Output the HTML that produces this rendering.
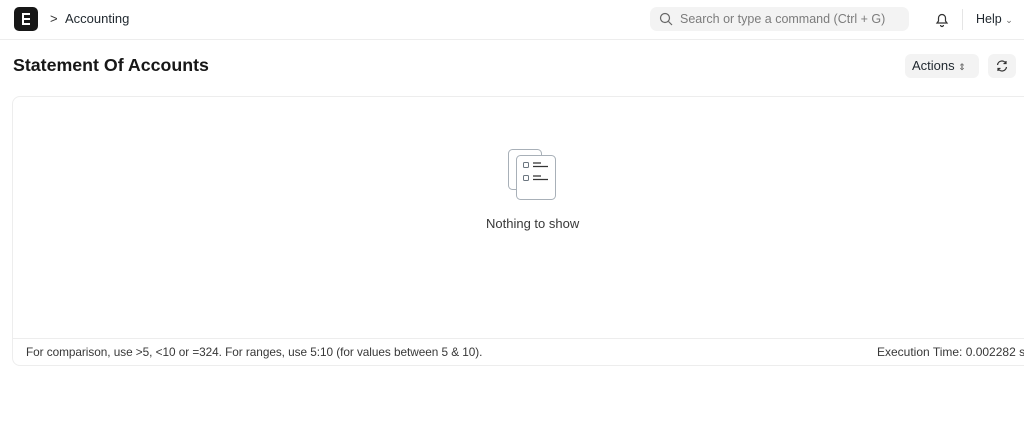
<!DOCTYPE html>
<html><head><style>
body{margin:0;width:1024px;height:439px;background:#fff;font-family:"Liberation Sans",sans-serif;color:#1f272e;position:relative;overflow:hidden}
.abs{position:absolute}
</style></head><body>
<div class="abs" style="left:0;top:0;width:1024px;height:39px;border-bottom:1px solid #ededed"></div>
<div class="abs" style="left:14px;top:7px;width:24px;height:24px;background:#171717;border-radius:5px"></div>
<div class="abs" style="left:22px;top:13px;width:8px;height:2px;background:#fff"></div>
<div class="abs" style="left:22px;top:13px;width:2px;height:12px;background:#fff"></div>
<div class="abs" style="left:22px;top:18px;width:8px;height:2px;background:#fff"></div>
<div class="abs" style="left:22px;top:23px;width:8px;height:2px;background:#fff"></div>
<div class="abs" style="left:50px;top:11px;font-size:13px;color:#333">&gt;</div>
<div class="abs" style="left:65px;top:11px;font-size:13px;color:#1f272e">Accounting</div>
<div class="abs" style="left:650px;top:7px;width:259px;height:24px;background:#f3f3f3;border-radius:7px"></div>
<svg class="abs" style="left:659px;top:12px" width="14" height="14" viewBox="0 0 14 14"><circle cx="6" cy="6" r="4.5" fill="none" stroke="#666" stroke-width="1.2"/><path d="M9.5 9.5L13 13" stroke="#666" stroke-width="1.2"/></svg>
<div class="abs" style="left:680px;top:12px;font-size:12.5px;color:#7c7c7c">Search or type a command (Ctrl + G)</div>
<svg class="abs" style="left:934px;top:11px" width="16" height="17" viewBox="0 0 16 17"><path d="M3 12h10l-1.5-2V7a3.5 3.5 0 0 0-7 0v3z M6.5 14a1.5 1.5 0 0 0 3 0" fill="none" stroke="#333" stroke-width="1.2"/></svg>
<div class="abs" style="left:962px;top:9px;width:1px;height:21px;background:#e5e5e5"></div>
<div class="abs" style="left:976px;top:12px;font-size:12.5px;color:#1f272e">Help <span style="font-size:9px;color:#666">&#8964;</span></div>
<div class="abs" style="left:13px;top:55px;font-size:17.8px;font-weight:bold;color:#171717">Statement Of Accounts</div>
<div class="abs" style="left:905px;top:54px;width:74px;height:24px;background:#f3f3f3;border-radius:6px"></div>
<div class="abs" style="left:912px;top:58px;font-size:13px;color:#1f272e">Actions <span style="font-size:9px;color:#555">&#8661;</span></div>
<div class="abs" style="left:988px;top:54px;width:28px;height:24px;background:#f3f3f3;border-radius:6px"></div>
<svg class="abs" style="left:995px;top:59px" width="14" height="14" viewBox="0 0 14 14"><path d="M2.5 6A4.5 4.5 0 0 1 11 4.5M11.5 8A4.5 4.5 0 0 1 3 9.5M11 2v2.5H8.5M3 12V9.5h2.5" fill="none" stroke="#333" stroke-width="1.2"/></svg>
<div class="abs" style="left:12px;top:96px;width:1020px;height:268px;border:1px solid #ededed;border-radius:8px"></div>
<div class="abs" style="left:13px;top:338px;width:1011px;height:1px;background:#ededed"></div>
<svg class="abs" style="left:507px;top:148px" width="50" height="54" viewBox="0 0 50 54"><rect x="1.5" y="1.5" width="33" height="40" rx="4" fill="#fff" stroke="#a8b0b8"/><rect x="9.5" y="7.5" width="39" height="44" rx="4" fill="#fff" stroke="#a8b0b8"/><rect x="16.5" y="14.5" width="5" height="5" rx="1" fill="none" stroke="#6b7680"/><rect x="16.5" y="27.5" width="5" height="5" rx="1" fill="none" stroke="#6b7680"/><path d="M26 15h8M26 18.5h15M26 28h8M26 31.5h15" stroke="#333" stroke-width="1.2"/></svg>
<div class="abs" style="left:486px;top:216px;font-size:13px;color:#383838">Nothing to show</div>
<div class="abs" style="left:26px;top:345px;font-size:11.8px;letter-spacing:-0.05px;color:#383838">For comparison, use &gt;5, &lt;10 or =324. For ranges, use 5:10 (for values between 5 &amp; 10).</div>
<div class="abs" style="left:877px;top:345px;font-size:12px;color:#383838;white-space:nowrap">Execution Time: 0.002282 sec</div>
</body></html>
